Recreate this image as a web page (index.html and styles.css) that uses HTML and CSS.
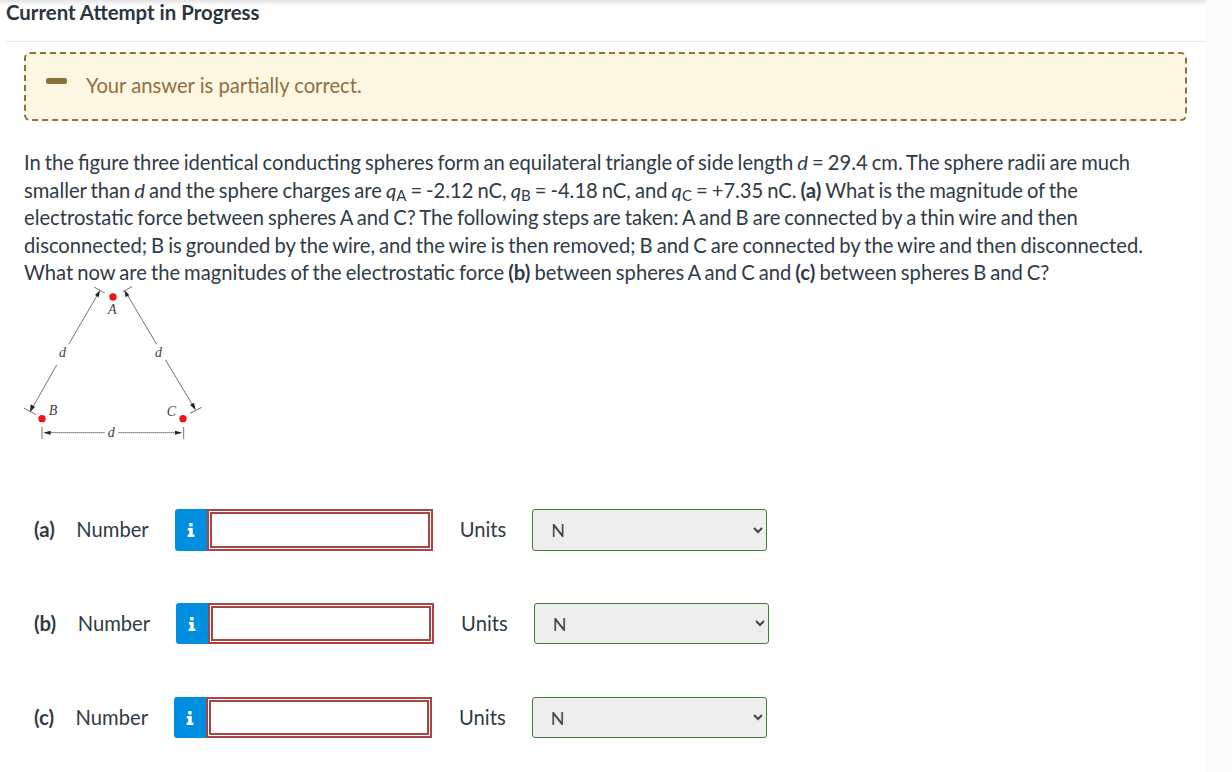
FILE: index.html
```html
<!DOCTYPE html>
<html lang="en">
<head>
	<meta charset="UTF-8">
	<meta name="viewport" content="width=device-width, initial-scale=1">
	<title>Current Attempt in Progress</title>
	<link rel="stylesheet" href="styles.css">
</head>
<body>
	<div class="page">
		<h2 class="attempt-title">Current Attempt in Progress</h2>

		<div class="feedback">
			<span class="feedback-icon"></span>
			<span>Your answer is partially correct.</span>
		</div>

		<p class="question">In the figure three identical conducting spheres form an equilateral triangle of side length <i>d</i> = 29.4 cm. The sphere radii are much smaller than <i>d</i> and the sphere charges are <i>q</i><sub>A</sub> = -2.12 nC, <i>q</i><sub>B</sub> = -4.18 nC, and <i>q</i><sub>C</sub> = +7.35 nC. <b>(a)</b> What is the magnitude of the electrostatic force between spheres A and C? The following steps are taken: A and B are connected by a thin wire and then disconnected; B is grounded by the wire, and the wire is then removed; B and C are connected by the wire and then disconnected. What now are the magnitudes of the electrostatic force <b>(b)</b> between spheres A and C and <b>(c)</b> between spheres B and C?</p>

		<svg class="figure" width="210" height="170" viewBox="0 0 630 510">
			<g class="dim">
				<path d="M268 32 L176 190 M140 252 L62 390"/>
				<path d="M345 30 L440 190 M466 236 L555 384"/>
				<path d="M105 455 H285 M325 455 H512" stroke-dasharray="5 1"/>
				<path d="M252 18 L284 36 M338 32 L366 17"/>
				<path d="M42 381 L78 401 M540 397 L575 379"/>
				<path d="M96 438 V474 M521 438 V474"/>
			</g>
			<g class="arrows">
				<path d="M270 28 L255 42 L266 49 Z"/>
				<path d="M343 28 L358 42 L347 49 Z"/>
				<path d="M60 393 L62 370 L75 378 Z"/>
				<path d="M557 387 L540 372 L552 365 Z"/>
				<path d="M100 455 L122 449 V461 Z"/>
				<path d="M517 455 L495 449 V461 Z"/>
			</g>
			<circle class="sphere" cx="309" cy="48" r="11"/>
			<circle class="sphere" cx="96" cy="413" r="11"/>
			<circle class="sphere" cx="519" cy="413" r="11"/>
			<text x="294" y="99">A</text>
			<text x="116" y="401">B</text>
			<text x="470" y="404">C</text>
			<text x="147" y="228">d</text>
			<text x="435" y="228">d</text>
			<text x="293" y="468">d</text>
		</svg>

		<div class="answer-row">
			<span class="part">(a)</span>
			<span class="field-label">Number</span>
			<span class="info-btn"><svg width="8" height="14" viewBox="0 0 8 14"><path d="M2.2 0h3.4v3.4H2.2zM.8 5h4.9v6.6H7.4V14H.6v-2.4h1.6V7.4H.8z"/></svg></span>
			<input class="answer-input" type="text">
			<span class="units-label">Units</span>
			<select class="units-select"><option>N</option></select>
		</div>

		<div class="answer-row row-short">
			<span class="part">(b)</span>
			<span class="field-label">Number</span>
			<span class="info-btn"><svg width="8" height="14" viewBox="0 0 8 14"><path d="M2.2 0h3.4v3.4H2.2zM.8 5h4.9v6.6H7.4V14H.6v-2.4h1.6V7.4H.8z"/></svg></span>
			<input class="answer-input" type="text">
			<span class="units-label">Units</span>
			<select class="units-select"><option>N</option></select>
		</div>

		<div class="answer-row row-short">
			<span class="part">(c)</span>
			<span class="field-label">Number</span>
			<span class="info-btn"><svg width="8" height="14" viewBox="0 0 8 14"><path d="M2.2 0h3.4v3.4H2.2zM.8 5h4.9v6.6H7.4V14H.6v-2.4h1.6V7.4H.8z"/></svg></span>
			<input class="answer-input" type="text">
			<span class="units-label">Units</span>
			<select class="units-select"><option>N</option></select>
		</div>
	</div>
</body>
</html>
```

FILE: styles.css
```css
:root {
	--text-color: #2f3b46;
	--warning-color: #8f703d;
	--error-color: #a94442;
}

html, body {
	height: 100%;
}

body {
	font-family: Lato, "Open Sans", sans-serif;
	font-size: 20.2px;
	margin: 0;
	padding: 0;
	background-color: #fafafa;
	color: var(--text-color);
	overflow: hidden;
}

.page {
	width: 1206px;
	height: 772px;
	background: #fff;
	box-shadow: inset 0 7px 6px -6px rgba(0, 0, 0, 0.18);
	overflow: hidden;
}

.attempt-title {
	margin: 0 0 0 6px;
	padding: 0;
	height: 41px;
	line-height: 25px;
	font-size: 20.4px;
	font-weight: 700;
	border-bottom: 1px solid #e8e8e8;
	color: #2a3540;
}

.feedback {
	display: flex;
	align-items: flex-start;
	box-sizing: border-box;
	margin: 10px 19px 0 24px;
	width: 1163px;
	height: 69px;
	padding: 18px 0 0 20px;
	background: #fdf6e3;
	border: 2px dashed var(--warning-color);
	border-radius: 6px;
	color: var(--warning-color);
	line-height: 26px;
}

.feedback-icon {
	flex: none;
	width: 21px;
	height: 6px;
	margin: 6px 19px 0 0;
	border-radius: 2px;
	background: var(--warning-color);
}

.question {
	margin: 28px 60px 0 24px;
	line-height: 27.5px;
	word-spacing: -1.15px;
}

.question b {
	font-size: 20.4px;
}

.question sub {
	font-size: 15px;
	line-height: 0;
	vertical-align: -3px;
}

.figure {
	display: block;
	margin: -5.5px 0 0 10px;
}

.figure text {
	font-family: "Liberation Serif", serif;
	font-style: italic;
	font-size: 42px;
	fill: #444;
}

.dim path {
	fill: none;
	stroke: #555;
	stroke-width: 2.5;
}

.arrows path {
	fill: #222;
}

.sphere {
	fill: #f01414;
}

.answer-row {
	display: flex;
	align-items: center;
	height: 42px;
	margin-top: 58px;
	padding-left: 34px;
}

.row-short {
	height: 41px;
	margin-top: 52px;
}

.row-short:last-child {
	margin-top: 53px;
}

.part {
	font-size: 20.4px;
	font-weight: 700;
	margin: 0 21.5px 2px 0;
}

.field-label {
	margin: 0 26px 2px 0;
}

.info-btn {
	flex: none;
	display: flex;
	align-items: center;
	justify-content: center;
	width: 32px;
	height: 100%;
	background: #008ee0;
	border-radius: 3px 0 0 3px;
}

.info-btn svg {
	fill: #fff;
}

.answer-input {
	flex: none;
	box-sizing: border-box;
	width: 226px;
	height: 100%;
	padding: 0 8px;
	background: #fff;
	border: 5px double var(--error-color);
	border-radius: 0;
}

.units-label {
	margin: 0 26px 2px 27px;
}

.units-select {
	flex: none;
	box-sizing: border-box;
	width: 235px;
	height: 100%;
	padding-left: 14px;
	background-color: #eee;
	border: 1px solid #3f7d3f;
	border-radius: 3px;
	color: #444;
	font-family: Lato, sans-serif;
	font-size: 18px;
}
```
